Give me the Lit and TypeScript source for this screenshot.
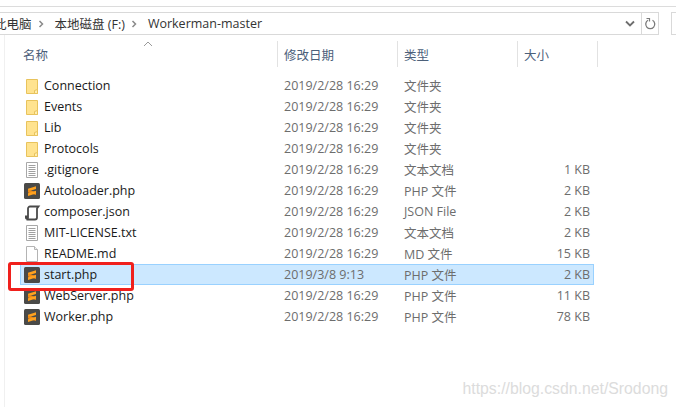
import { LitElement, html, css, svg } from "lit";
import { customElement } from "lit/decorators.js";

type Kind = "folder" | "doc" | "subl" | "json" | "blank";
const rows: { n: string; d: string; t: string; s: string; k: Kind; sel?: boolean }[] = [
  { n: "Connection", d: "2019/2/28 16:29", t: "文件夹", s: "", k: "folder" },
  { n: "Events", d: "2019/2/28 16:29", t: "文件夹", s: "", k: "folder" },
  { n: "Lib", d: "2019/2/28 16:29", t: "文件夹", s: "", k: "folder" },
  { n: "Protocols", d: "2019/2/28 16:29", t: "文件夹", s: "", k: "folder" },
  { n: ".gitignore", d: "2019/2/28 16:29", t: "文本文档", s: "1 KB", k: "doc" },
  { n: "Autoloader.php", d: "2019/2/28 16:29", t: "PHP 文件", s: "2 KB", k: "subl" },
  { n: "composer.json", d: "2019/2/28 16:29", t: "JSON File", s: "2 KB", k: "json" },
  { n: "MIT-LICENSE.txt", d: "2019/2/28 16:29", t: "文本文档", s: "2 KB", k: "doc" },
  { n: "README.md", d: "2019/2/28 16:29", t: "MD 文件", s: "15 KB", k: "blank" },
  { n: "start.php", d: "2019/3/8 9:13", t: "PHP 文件", s: "2 KB", k: "subl", sel: true },
  { n: "WebServer.php", d: "2019/2/28 16:29", t: "PHP 文件", s: "11 KB", k: "subl" },
  { n: "Worker.php", d: "2019/2/28 16:29", t: "PHP 文件", s: "78 KB", k: "subl" },
];

function icon(k: Kind) {
  const inner =
    k === "folder"
      ? svg`<path d="M3.500 2.500h11v14h-11z" fill="#ffe38f" stroke="#e8c35c"/><path d="M14.500 12.500v4h-3v-3z" fill="#ffeeb0" stroke="#e8c35c"/>`
      : k === "subl"
      ? svg`<rect x="1" y="1" width="16" height="16" rx="1.500" fill="#4a4a48"/><path d="M5 6.800 13 4.200v2.800L5 9.500z" fill="#ffa21f"/><path d="M5 7.500l8 2.800v2.600L5 10.400z" fill="#f08a14"/><path d="M5 11.200l8-2.500v2.700L5 14z" fill="#ffa21f"/>`
      : k === "json"
      ? svg`<path d="M7 3.500h8.500L14 5.500v9c0 1.500-1 2-2 2H3.500c1 0 1.500-.8 1.500-2V5.500c0-1.200 1-2 2-2z" fill="#fff" stroke="#4a4a4a" stroke-width="1.800"/><path d="M2 12.500h3v4H3.500C2.500 16.500 2 15.500 2 14.500z" fill="#4a4a4a"/>`
      : k === "doc"
      ? svg`<path d="M3.500 1.500h11v15h-11z" fill="#fff" stroke="#a8a8a8"/><path d="M5.500 4.500h7M5.500 6.500h7M5.500 8.500h7M5.500 10.500h7M5.500 12.500h7M5.500 14.500h7" stroke="#a0a0a0"/>`
      : svg`<path d="M3.500 1.500h8l3 3v12h-11z" fill="#fff" stroke="#b4b4b4"/><path d="M11.500 1.500v3h3" fill="#eee" stroke="#b4b4b4"/>`;
  return html`<svg class="ic" width="18" height="18" viewBox="0 0 18 18">${inner}</svg>`;
}

@customElement("app-root")
export class AppRoot extends LitElement {
  static styles = css`
    :host { display: block; width: 676px; height: 407px; background: #fff; overflow: hidden; position: relative;
      font: 12.5px "Open Sans", "Noto Sans CJK SC", sans-serif; color: #6d6d6d; }
    .topline { height: 1px; margin-top: 6px; background: #dcdcdc; }
    .barwrap { display: flex; gap: 12px; height: 23px; margin-top: 5px; }
    .bar { width: 659px; box-sizing: border-box; border: 1px solid #d9d9d9; border-left: 0; display: flex; align-items: center; color: #333; }
    .crumbs { flex: 1; display: flex; align-items: center; overflow: hidden; white-space: nowrap; }
    .crumb0 { margin-left: -6px; }
    .sep { width: 17px; display: flex; justify-content: center; margin: 0 5px 0 1px; }
    .dd { width: 22px; display: flex; justify-content: center; }
    .refresh { width: 16px; border-left: 1px solid #d9d9d9; height: 100%; display: flex; align-items: center; justify-content: center; }
    .stub { flex: 1; border: 1px solid #d9d9d9; border-right: 0; }
    .pane { display: flex; flex-direction: column; margin-left: 4px; border-left: 1px solid #f0f0f0; height: 372px; }
    .head { display: grid; grid-template-columns: 273px 120px 120px 80px; height: 26px; margin-top: 6px; position: relative; }
    .hc { border-right: 1px solid #e2e2e2; padding-left: 18px; box-sizing: border-box; display: flex; align-items: center; color: #4c607a; }
    .hc + .hc { padding-left: 6px; }
    .arrow { position: absolute; left: 138px; top: 0; }
    .list { margin-top: 8px; display: flex; flex-direction: column; margin-left: 15px; width: 574px; }
    .row { display: grid; grid-template-columns: 258px 120px 120px 71px; height: 21px; box-sizing: border-box; align-items: center; border: 1px solid transparent; }
    .row.sel { background: #cce8ff; border-color: #99d1ff; }
    .name { display: flex; align-items: center; gap: 3px; color: #1a1a1a; padding-left: 2px; white-space: nowrap; }
    .ic { flex: none; }
    .date { padding-left: 5px; white-space: nowrap; }
    .type { padding-left: 5px; }
    .size { text-align: right; white-space: nowrap; }
    .mark { position: absolute; left: 8px; top: 262px; width: 126px; height: 29px; box-sizing: border-box; border: 3px solid #f0201c; border-radius: 3px; }
    .wm { position: absolute; right: 8px; top: 380px; font: 15.8px "Liberation Sans", sans-serif; color: #dcdcdc; white-space: nowrap; }
  `;

  render() {
    const chev = html`<span class="sep"><svg width="6" height="8" viewBox="0 0 6 8"><path d="M1.500 1l3 3-3 3" fill="none" stroke="#8a8a8a" stroke-width="1.500"/></svg></span>`;
    return html`
      <div class="topline"></div>
      <div class="barwrap">
        <div class="bar">
          <div class="crumbs">
            <span class="crumb0">此电脑</span>
            ${chev}
            <span>本地磁盘 (F:)</span>
            ${chev}
            <span>Workerman-master</span>
          </div>
          <span class="dd"><svg width="10" height="7" viewBox="0 0 10 7"><path d="M1 1.500l4 4 4-4" fill="none" stroke="#6e6e6e" stroke-width="1.800"/></svg></span>
          <span class="refresh"><svg width="12" height="12" viewBox="0 0 12 12"><path d="M4 2.300A4.500 4.500 0 1 0 8.500 2.300" fill="none" stroke="#7a7a7a" stroke-width="1.300"/><path d="M2.500 .5h3v3" fill="none" stroke="#7a7a7a" stroke-width="1.200"/></svg></span>
        </div>
        <div class="stub"></div>
      </div>
      <div class="pane">
        <div class="head">
          <svg class="arrow" width="10" height="6" viewBox="0 0 10 6"><path d="M1 5l4-4 4 4" fill="none" stroke="#9a9a9a"/></svg>
          <div class="hc">名称</div><div class="hc">修改日期</div><div class="hc">类型</div><div class="hc">大小</div>
        </div>
        <div class="list">
          ${rows.map(
            (r) => html`<div class="row ${r.sel ? "sel" : ""}">
              <div class="name">${icon(r.k)}<span>${r.n}</span></div>
              <div class="date">${r.d}</div>
              <div class="type">${r.t}</div>
              <div class="size">${r.s}</div>
            </div>`
          )}
        </div>
      </div>
      <div class="mark"></div>
      <div class="wm">https://blog.csdn.net/Srodong</div>
    `;
  }
}
